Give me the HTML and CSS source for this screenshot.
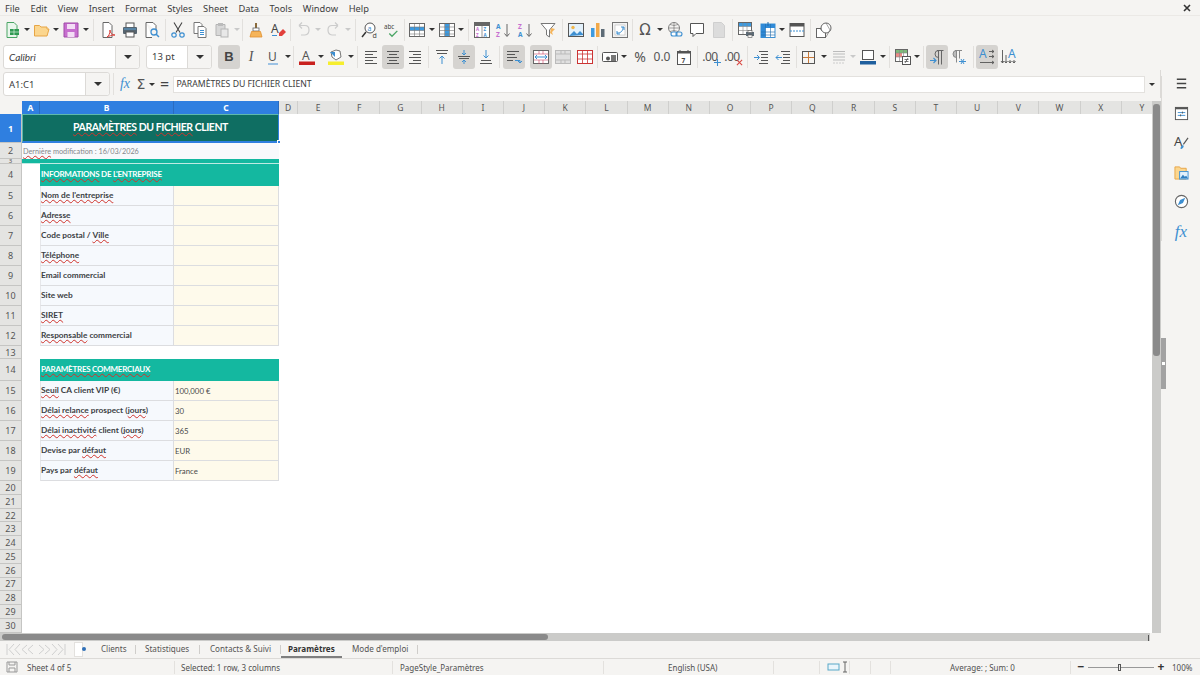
FILE: index.html
```html
<!DOCTYPE html>
<html lang="en">
<head>
    <meta charset="UTF-8" />
    <title>Paramètres - Calc</title>
    <link rel="stylesheet" href="styles.css">
</head>
<body>
<div class="app">
    <div class="menubar">
        <span>File</span><span>Edit</span><span>View</span><span>Insert</span><span>Format</span><span>Styles</span><span>Sheet</span><span>Data</span><span>Tools</span><span>Window</span><span>Help</span>
        <svg class="close-doc" viewBox="0 0 8 8"><path d="M1 1l6 6M7 1l-6 6" stroke="#333" stroke-width="1.6"/></svg>
    </div>

    <div class="toolbar">
        <div class="btn"><svg viewBox="0 0 16 16"><path d="M3 .5h7l3 3v12H3z" fill="#e9f6ec" stroke="#4aa565"/><rect x="6" y="7" width="9" height="6" fill="#2f9a52"/><path d="M6 10h9M10 7v6" stroke="#d8f0df" stroke-width=".7"/></svg></div><i class="dd"></i>
        <div class="btn"><svg viewBox="0 0 16 16"><path d="M.5 3.5h5l1.5 1.5h6v2H15l-2 7H.5z" fill="#fbd68f" stroke="#e7a545"/></svg></div><i class="dd"></i>
        <div class="btn"><svg viewBox="0 0 16 16"><path d="M1 1h14v14H1z" fill="#c76ecf" stroke="#a04aa8"/><rect x="4" y="2" width="8" height="5" fill="#f3ddf5"/><rect x="4.500" y="10" width="7" height="5" fill="#f3ddf5"/></svg></div><i class="dd"></i>
        <i class="sep s7"></i>
        <div class="btn"><svg viewBox="0 0 16 16"><path d="M3 .5h6l3 3v12H3z" fill="#fff" stroke="#666"/><path d="M7 15c2-1 3-4 3-7 0 3 2 5 5 5-3 0-6 1-8 2z" fill="none" stroke="#d9443f"/></svg></div>
        <div class="btn"><svg viewBox="0 0 16 16"><rect x="4" y="1" width="8" height="5" fill="#fff" stroke="#555"/><rect x="1" y="5" width="14" height="7" rx="1" fill="#56646f"/><rect x="4" y="10" width="8" height="5" fill="#fff" stroke="#555"/><path d="M2 7h12" stroke="#5aa3d8"/></svg></div>
        <div class="btn"><svg viewBox="0 0 16 16"><path d="M2 .5h7l3 3v5M8 15.500H2V.5" fill="#fff" stroke="#666"/><circle cx="10" cy="10" r="3" fill="none" stroke="#3d8fd1" stroke-width="1.300"/><path d="M12 12l3 3" stroke="#3d8fd1" stroke-width="1.500"/></svg></div>
        <i class="sep s4"></i>
        <div class="btn"><svg viewBox="0 0 16 16"><path d="M4 .5l6 10M12 .5l-6 10" stroke="#444" stroke-width="1.100"/><circle cx="4" cy="13" r="2.200" fill="none" stroke="#3d8fd1" stroke-width="1.200"/><circle cx="12" cy="13" r="2.200" fill="none" stroke="#3d8fd1" stroke-width="1.200"/></svg></div>
        <div class="btn"><svg viewBox="0 0 16 16"><path d="M2 .5h6l2 2v9H2z" fill="#fff" stroke="#777"/><path d="M6 4.500h6l2 2v9H6z" fill="#fff" stroke="#777"/><path d="M8 8.500h4M8 10.500h4M8 12.500h4" stroke="#3d8fd1"/></svg></div>
        <div class="btn"><svg viewBox="0 0 16 16"><path d="M2 2.500h9v11H2z" fill="#d8d8d8" stroke="#b5b5b5"/><rect x="4" y="1" width="5" height="3" fill="#bbb"/><rect x="7" y="7" width="7" height="8" fill="#e8e8e8" stroke="#b5b5b5"/></svg></div><i class="dd off"></i>
        <i class="sep s4"></i>
        <div class="btn"><svg viewBox="0 0 16 16"><path d="M8 1v6" stroke="#8a6a3a" stroke-width="2"/><rect x="5" y="6" width="6" height="3" fill="#fff" stroke="#666" stroke-width=".8"/><path d="M3.500 9.500h9L14 15H2z" fill="#f5b45a" stroke="#e09030" stroke-width=".8"/></svg></div>
        <div class="btn"><svg viewBox="0 0 16 16"><text x="1" y="11" class="svg-a">A</text><path d="M2 13.500h5" stroke="#3d8fd1"/><path d="M9 11l4-4 3 3-4 4H9z" fill="#e2403c"/></svg></div>
        <i class="sep s4"></i>
        <div class="btn"><svg viewBox="0 0 16 16"><path d="M5 3.500H11q4 0 4 4.500t-4 5H7M5 3.500l3-3M5 3.500l3 3" transform="translate(-2 0)" fill="none" stroke="#ccc" stroke-width="1.200"/></svg></div><i class="dd off"></i>
        <div class="btn"><svg viewBox="0 0 16 16"><path d="M12 3.500H6q-4 0-4 4.500t4 5h4M12 3.500l-3-3M12 3.500l-3 3" transform="translate(1 0)" fill="none" stroke="#ccc" stroke-width="1.200"/></svg></div><i class="dd off"></i>
        <i class="sep s7"></i>
        <div class="btn"><svg viewBox="0 0 16 16"><circle cx="8" cy="6" r="5" fill="#fff" stroke="#555"/><path d="M4 10l-4 5" stroke="#333" stroke-width="1.500"/><text x="5.500" y="8.500" class="svg-s blue">a</text><text x="10.500" y="16" class="svg-s">d</text></svg></div>
        <div class="btn wide"><svg viewBox="0 0 18 16"><text x="0" y="7" class="svg-s">abc</text><path d="M6 12l3 3 6-6" fill="none" stroke="#4aa565" stroke-width="1.500"/></svg></div>
        <i class="sep s3"></i>
        <div class="btn"><svg viewBox="0 0 16 16"><rect x=".5" y="1.500" width="15" height="13" fill="#fff" stroke="#666"/><rect x="1" y="5" width="14" height="3.500" fill="#3d9ae0"/><path d="M1 5h14M1 8.500h14M1 12h14M5.500 2v12M10.500 2v12" stroke="#777" stroke-width=".6"/></svg></div><i class="dd"></i>
        <div class="btn"><svg viewBox="0 0 16 16"><rect x=".5" y="1.500" width="15" height="13" fill="#fff" stroke="#666"/><rect x="6" y="2" width="4.500" height="12" fill="#3d9ae0"/><path d="M1 5h14M1 8.500h14M1 12h14M5.500 2v12M10.500 2v12" stroke="#777" stroke-width=".6"/></svg></div><i class="dd"></i>
        <i class="sep s6"></i>
        <div class="btn"><svg viewBox="0 0 16 16"><rect x=".5" y=".5" width="15" height="15" fill="#fff" stroke="#666"/><rect x="1" y="1" width="14" height="3" fill="#666"/><path d="M8 4v11" stroke="#999"/><text x="2" y="9" class="svg-t tiny purple">A</text><text x="2" y="15" class="svg-t tiny purple">Z</text><text x="9.500" y="9" class="svg-t tiny blue">Z</text><text x="9.500" y="15" class="svg-t tiny blue">A</text></svg></div>
        <div class="btn"><svg viewBox="0 0 16 16"><text x="0" y="7" class="svg-t blue">A</text><text x="0" y="15" class="svg-t purple">Z</text><path d="M11 2v12M8.500 11.500l2.500 3 2.500-3" fill="none" stroke="#666"/></svg></div>
        <div class="btn"><svg viewBox="0 0 16 16"><text x="0" y="7" class="svg-t purple">Z</text><text x="0" y="15" class="svg-t blue">A</text><path d="M11 2v12M8.500 11.500l2.500 3 2.500-3" fill="none" stroke="#666"/></svg></div>
        <div class="btn"><svg viewBox="0 0 16 16"><path d="M1 1.500h14L9.500 8v7L6.500 13V8z" fill="#fff" stroke="#777"/><path d="M11 6l4 1-3 3 1 3-3-2z" fill="#f5b45a"/></svg></div>
        <i class="sep s6"></i>
        <div class="btn"><svg viewBox="0 0 16 16"><rect x=".5" y="1.500" width="15" height="13" fill="#e3f1fb" stroke="#555"/><circle cx="5" cy="5.500" r="1.700" fill="#f1b64a"/><path d="M1 14l5-5 3 3 3-3 3 3v1z" fill="#3d8fd1"/></svg></div>
        <div class="btn"><svg viewBox="0 0 16 16"><rect x="1" y="6" width="3.500" height="9" fill="#3d9ae0"/><rect x="6" y="1" width="3.500" height="14" fill="#f1a94a"/><rect x="11" y="7" width="3.500" height="8" fill="#5d6b76"/></svg></div>
        <div class="btn"><svg viewBox="0 0 16 16"><rect x=".5" y=".5" width="15" height="15" fill="#f3f3f3" stroke="#777"/><rect x="3" y="3" width="10" height="10" fill="#fff" stroke="#bbb" stroke-width=".6"/><path d="M5 11c4 0 6-2 6-6M9 5h3v3M5 9v3h3" fill="none" stroke="#3d8fd1"/></svg></div>
        <i class="sep s3"></i>
        <div class="btn"><span class="omega">Ω</span></div><i class="dd"></i>
        <div class="btn"><svg viewBox="0 0 16 16"><circle cx="7" cy="6" r="5.500" fill="none" stroke="#666" stroke-width=".8"/><path d="M1.500 6h11M7 .5v11M3 2.500q4 2 8 0M3 9.500q4-2 8 0" fill="none" stroke="#666" stroke-width=".6"/><rect x="4" y="10" width="6" height="4" rx="2" fill="#fff" stroke="#3d8fd1" stroke-width="1.100"/><rect x="9" y="10" width="6" height="4" rx="2" fill="none" stroke="#3d8fd1" stroke-width="1.100"/></svg></div>
        <div class="btn"><svg viewBox="0 0 16 16"><path d="M1.500 1.500h13v10H7l-3 3v-3H1.500z" fill="#fff" stroke="#555"/></svg></div>
        <div class="btn"><svg viewBox="0 0 16 16"><path d="M2.500.5h8l3 3v12h-11z" fill="#dcdcdc" stroke="#cfcfcf"/></svg></div>
        <i class="sep s5"></i>
        <div class="btn"><svg viewBox="0 0 16 16"><rect x=".5" y=".5" width="13" height="12" fill="#fff" stroke="#666"/><rect x="1" y="1" width="12" height="3.500" fill="#3d9ae0"/><path d="M1 4.500h12M1 8.500h12M5 1v11M9 1v11" stroke="#888" stroke-width=".6"/><rect x="8" y="10" width="8" height="4" fill="#5d6b76"/><rect x="10" y="8.500" width="4" height="2" fill="#fff" stroke="#555" stroke-width=".6"/><rect x="10" y="13" width="4" height="2.500" fill="#fff" stroke="#555" stroke-width=".6"/></svg></div>
        <div class="btn"><svg viewBox="0 0 16 16"><rect x="1" y="2" width="14" height="13.500" fill="#fff" stroke="#3d8fd1"/><rect x="1" y="2" width="4.500" height="13.500" fill="#2f8ad8"/><rect x="1" y="2" width="14" height="4" fill="#2f8ad8"/><path d="M1 10h14M1 13h14M5.500 2v13M10.500 2v13" stroke="#1f6aaa" stroke-width=".6"/><path d="M8 0v4" stroke="#1f6aaa"/></svg></div><i class="dd"></i>
        <div class="btn"><svg viewBox="0 0 16 16"><rect x="1" y="1.500" width="14" height="13" fill="#fff" stroke="#555"/><rect x="1" y="1.500" width="14" height="3" fill="#555"/><path d="M1 9h14" stroke="#3d8fd1" stroke-dasharray="2 1"/></svg></div>
        <i class="sep s5"></i>
        <div class="btn"><svg viewBox="0 0 16 16"><rect x=".5" y="6.500" width="9" height="9" fill="#fff" stroke="#666"/><circle cx="10" cy="6" r="5" fill="#fff" stroke="#666"/><path d="M4 6.500L6 9M10 1l4 7-4 7" fill="none" stroke="#666" stroke-width=".6"/></svg></div>
    </div>

    <div class="toolbar second">
        <div class="combo font-box"><span class="font-name">Calibri</span><b class="combo-arrow"><i class="dd"></i></b></div>
        <div class="combo size-box"><span>13 pt</span><b class="combo-arrow"><i class="dd"></i></b></div>
        <div class="btn on"><span class="bold-b">B</span></div>
        <div class="btn"><span class="ital-i">I</span></div>
        <div class="btn"><svg viewBox="0 0 16 16"><text x="3" y="12" class="svg-u">U</text><path d="M3 15h10" stroke="#6ba8dc" stroke-width="1.300"/></svg></div><i class="dd"></i>
        <i class="sep s4"></i>
        <div class="btn"><svg viewBox="0 0 16 16"><text x="3" y="11" class="svg-u">A</text><rect x="0" y="12.500" width="16" height="3.500" fill="#c9211e"/></svg></div><i class="dd"></i>
        <div class="btn"><svg viewBox="0 0 16 16"><path d="M3 3l5-2 4 1 1 6-5 3-4-3z" fill="#fff" stroke="#555" stroke-width=".8"/><path d="M2 3h5v5z" fill="#3d8fd1"/><rect x="0" y="12.500" width="16" height="3.500" fill="#f6ee2e"/></svg></div><i class="dd"></i>
        <i class="sep s5"></i>
        <div class="btn"><svg viewBox="0 0 16 16" class="lines"><path d="M2 2.500h12M2 5.500h8M2 8.500h12M2 11.500h8M2 14.500h12"/></svg></div>
        <div class="btn on"><svg viewBox="0 0 16 16" class="lines"><path d="M2 2.500h12M4 5.500h8M2 8.500h12M4 11.500h8M2 14.500h12"/></svg></div>
        <div class="btn"><svg viewBox="0 0 16 16" class="lines"><path d="M2 2.500h12M6 5.500h8M2 8.500h12M6 11.500h8M2 14.500h12"/></svg></div>
        <i class="sep s5"></i>
        <div class="btn"><svg viewBox="0 0 16 16"><path d="M2 1.500h12M3 4.500h10" stroke="#555"/><path d="M8 15V7M5.500 9.500L8 7l2.500 2.500" fill="none" stroke="#3d8fd1"/></svg></div>
        <div class="btn on"><svg viewBox="0 0 16 16"><path d="M2 7.500h12M3 9.500h10" stroke="#555"/><path d="M8 1v5M6 4l2 2 2-2M8 15v-4M6 13l2-2 2 2" fill="none" stroke="#3d8fd1"/></svg></div>
        <div class="btn"><svg viewBox="0 0 16 16"><path d="M2 14.500h12M3 11.500h10" stroke="#555"/><path d="M8 1v8M5.500 6.500L8 9l2.500-2.500" fill="none" stroke="#3d8fd1"/></svg></div>
        <i class="sep s6"></i>
        <div class="btn on"><svg viewBox="0 0 16 16"><path d="M1 2.500h12M1 5.500h8M1 8.500h10M1 11.500h6" stroke="#555"/><path d="M9 11.500h5v2M12 12l2 2 2-2" fill="none" stroke="#3d8fd1"/></svg></div>
        <i class="gap5"></i>
        <div class="btn on"><svg viewBox="0 0 16 16"><rect x=".5" y="1.500" width="15" height="13" fill="#fff" stroke="#666"/><path d="M1 5h14M1 11h14M6 2v3M10 2v3M6 11v4M10 11v4" stroke="#c46" stroke-width=".6"/><path d="M2 8h12M4 6l-2 2 2 2M12 6l2 2-2 2" fill="none" stroke="#3d8fd1"/></svg></div>
        <div class="btn"><svg viewBox="0 0 16 16"><rect x=".5" y="1.500" width="15" height="13" fill="#e0e0e0" stroke="#bbb"/><path d="M1 5h14M1 11h14M6 2v3M10 2v3M6 11v4M10 11v4" stroke="#bbb"/></svg></div>
        <div class="btn"><svg viewBox="0 0 16 16"><rect x=".5" y="1.500" width="15" height="13" fill="#fff" stroke="#c33"/><path d="M1 5h14M1 10h14M5.500 2v12M10.500 2v12" stroke="#c33" stroke-width=".8"/></svg></div>
        <i class="sep s3"></i>
        <div class="btn"><svg viewBox="0 0 16 16"><rect x=".5" y="3.500" width="15" height="9" rx="1" fill="#fff" stroke="#555"/><circle cx="6" cy="9.500" r="2" fill="#555"/><rect x="9" y="6" width="5" height="6" fill="#777"/></svg></div><i class="dd"></i>
        <i class="s1"></i>
        <div class="btn"><span class="pct">%</span></div>
        <div class="btn"><span class="num-t">0.0</span></div>
        <div class="btn"><svg viewBox="0 0 16 16"><rect x="1.500" y="2.500" width="13" height="13" fill="#fff" stroke="#555"/><rect x="1.500" y="2.500" width="13" height="2" fill="#555"/><path d="M4 1v3M12 1v3" stroke="#555"/><text x="5.500" y="13.500" class="svg-t">7</text></svg></div>
        <i class="sep s5"></i>
        <div class="btn"><span class="num-t small">.00</span><svg class="mark" viewBox="0 0 8 8"><path d="M4 0v8M0 4h8" stroke="#3d8fd1" stroke-width="1.200"/></svg></div>
        <div class="btn"><span class="num-t small">.00</span><svg class="mark" viewBox="0 0 8 8"><path d="M1 1l6 6M7 1l-6 6" stroke="#d9443f" stroke-width="1.200"/></svg></div>
        <i class="sep s6"></i>
        <div class="btn"><svg viewBox="0 0 16 16"><path d="M6 2.500h9M8 5.500h7M8 8.500h7M8 11.500h7M6 14.500h9" stroke="#555"/><path d="M1 8.500h5M4 6l2.500 2.500L4 11" fill="none" stroke="#3d8fd1"/></svg></div>
        <div class="btn"><svg viewBox="0 0 16 16"><path d="M6 2.500h9M8 5.500h7M8 8.500h7M8 11.500h7M6 14.500h9" stroke="#555"/><path d="M7 8.500H1M3.500 6L1 8.500 3.500 11" fill="none" stroke="#3d8fd1"/></svg></div>
        <i class="sep s4"></i>
        <div class="btn"><svg viewBox="0 0 16 16"><rect x="1.500" y="2.500" width="12" height="12" fill="none" stroke="#555"/><path d="M7.500 3v11M2 8.500h11" stroke="#c97a3a"/></svg></div><i class="dd"></i>
        <div class="btn"><svg viewBox="0 0 16 16"><path d="M2 2.500h12M2 5h12M2 8h12M2 11h12" stroke="#bbb" stroke-width="1.200"/><path d="M2 14h12" stroke="#ccc" stroke-dasharray="2 1"/></svg></div><i class="dd off"></i>
        <div class="btn"><svg viewBox="0 0 16 16"><rect x="2.500" y="1.500" width="11" height="9" fill="#fff" stroke="#555"/><rect x="0" y="12" width="16" height="3.500" fill="#1f5f9e"/></svg></div><i class="dd"></i>
        <i class="sep s5"></i>
        <div class="btn"><svg viewBox="0 0 16 16"><rect x=".5" y=".5" width="12" height="12" fill="#fff" stroke="#666"/><rect x="1" y="1" width="11" height="3" fill="#7dbb7a"/><rect x="1" y="4" width="6" height="4" fill="#ec8b85"/><path d="M1 4h11M1 8h11M4.500 1v11M8.500 1v11" stroke="#888" stroke-width=".6"/><rect x="7.500" y="7.500" width="8" height="8" fill="#fff" stroke="#555"/><path d="M9.500 10.500h4M9.500 12.500h4M10 14l3-5" stroke="#555" stroke-width=".8"/></svg></div><i class="dd"></i>
        <i class="sep s5"></i>
        <div class="btn on"><svg viewBox="0 0 16 16"><path d="M9.500 1.500v14M12.500 1.500v14M8 1.500h6.500M9.500 1.500a3.500 3.500 0 0 0 0 7" fill="none" stroke="#666"/><path d="M1 11.500h6M4.500 9L7 11.500 4.500 14" fill="none" stroke="#3d8fd1" stroke-width="1.100"/></svg></div>
        <div class="btn"><svg viewBox="0 0 16 16"><path d="M5.500 1.500v12M8.500 1.500v8M4 1.500h7M5.500 1.500a3.500 3.500 0 0 0 0 7" fill="#bbb" stroke="#888"/><path d="M8 12.500h7M13 10l-3 5M10 10l3 5" fill="none" stroke="#3d8fd1"/></svg></div>
        <i class="sep s6"></i>
        <div class="btn on"><svg viewBox="0 0 16 16"><text x="0" y="9" class="svg-a blue">A</text><path d="M10 2.500h5M13 1l2 1.500L13 4M10 7.500h5M13 6l2 1.500L13 9M1 13.500h14M13 12l2 1.500-2 1.500" fill="none" stroke="#555" stroke-width=".9"/></svg></div>
        <div class="btn"><svg viewBox="0 0 16 16"><text x="7" y="9" class="svg-a blue">A</text><path d="M1.500 1v13M0 12l1.500 2 1.500-2M5 6v8M3.500 12L5 14l1.500-2M9 11v3M7.500 12L9 14l1.500-2M13 11v3M11.500 12l1.500 2 1.500-2" fill="none" stroke="#555" stroke-width=".9"/></svg></div>
    </div>

    <div class="formula-row">
        <div class="formula-main">
            <div class="combo name-box"><span>A1:C1</span><b class="combo-arrow"><i class="dd"></i></b></div>
            <i class="sep s-name"></i>
            <span class="fx">fx</span>
            <span class="sigma">Σ</span><i class="dd"></i>
            <span class="equals">=</span>
            <div class="formula-input">PARAMÈTRES DU FICHIER CLIENT</div>
            <i class="dd formula-dd"></i>
        </div>
    </div>

    <div class="workspace">
        <div class="sheet">
            <div class="col-head">
                <div class="corner"></div>
                <div class="ch sel col-a">A</div><div class="ch sel col-b">B</div><div class="ch sel col-c">C</div><div class="ch col-d">D</div>
                <div class="ch">E</div><div class="ch">F</div><div class="ch">G</div><div class="ch">H</div><div class="ch">I</div><div class="ch">J</div><div class="ch">K</div><div class="ch">L</div><div class="ch">M</div><div class="ch">N</div><div class="ch">O</div><div class="ch">P</div><div class="ch">Q</div><div class="ch">R</div><div class="ch">S</div><div class="ch">T</div><div class="ch">U</div><div class="ch">V</div><div class="ch">W</div><div class="ch">X</div><div class="ch">Y</div>
            </div>
            <div class="sheet-body">
                <div class="row-head">
                    <div class="rh sel r1">1</div><div class="rh r2">2</div><div class="rh r3">3</div><div class="rh r-h">4</div>
                    <div class="rh r-n">5</div><div class="rh r-n">6</div><div class="rh r-n">7</div><div class="rh r-n">8</div><div class="rh r-n">9</div><div class="rh r-n">10</div><div class="rh r-n">11</div><div class="rh r-n">12</div>
                    <div class="rh r-s">13</div><div class="rh r-h">14</div>
                    <div class="rh r-n">15</div><div class="rh r-n">16</div><div class="rh r-n">17</div><div class="rh r-n">18</div><div class="rh r-n">19</div>
                    <div class="rh r-e">20</div><div class="rh r-e">21</div><div class="rh r-e">22</div><div class="rh r-e">23</div><div class="rh r-e">24</div><div class="rh r-e">25</div><div class="rh r-e">26</div><div class="rh r-e">27</div><div class="rh r-e">28</div><div class="rh r-e">29</div><div class="rh r-e">30</div>
                </div>
                <div class="cells">
                    <div class="title-cell"><span><u>PARAMÈTRES</u> DU <u>FICHIER</u> CLIENT</span><i class="sel-handle"></i></div>
                    <div class="modified"><span><u>Dernière</u> modification : 16/03/2026</span></div>
                    <div class="strip"></div>

                    <div class="section"><span><u>INFORMATIONS</u> DE <u>L'ENTREPRISE</u></span></div>
                    <div class="label"><u>Nom de l'entreprise</u></div><div class="value"></div>
                    <div class="label"><u>Adresse</u></div><div class="value"></div>
                    <div class="label">Code postal / <u>Ville</u></div><div class="value"></div>
                    <div class="label"><u>Téléphone</u></div><div class="value"></div>
                    <div class="label">Email commercial</div><div class="value"></div>
                    <div class="label">Site web</div><div class="value"></div>
                    <div class="label"><u>SIRET</u></div><div class="value"></div>
                    <div class="label"><u>Responsable</u> commercial</div><div class="value"></div>

                    <div class="spacer"></div>

                    <div class="section"><span><u>PARAMÈTRES COMMERCIAUX</u></span></div>
                    <div class="label"><u>Seuil</u> CA client VIP (€)</div><div class="value">100,000 €</div>
                    <div class="label"><u>Délai relance</u> prospect (<u>jours</u>)</div><div class="value">30</div>
                    <div class="label"><u>Délai inactivité</u> client (<u>jours</u>)</div><div class="value">365</div>
                    <div class="label">Devise par <u>défaut</u></div><div class="value">EUR</div>
                    <div class="label">Pays par <u>défaut</u></div><div class="value">France</div>
                </div>
            </div>
            <div class="hscroll"><div class="hscroll-thumb"></div></div>
            <div class="tabbar">
                <svg class="tab-nav" viewBox="0 0 60 13"><path d="M1 1v11M8 1L3 6.500 8 12M14 1L9 6.500 14 12M21 2l-5 4.500 5 4.500M27 2l-5 4.500 5 4.500M33 2l5 4.500-5 4.500M39 2l5 4.500-5 4.500M46 1l5 5.500-5 5.500M52 1l5 5.500-5 5.500M59 1v11" fill="none" stroke="#d0d0d0"/></svg>
                <div class="tab-new"><i class="tab-page"></i><i class="tab-dot"></i></div>
                <span class="tab t-clients">Clients</span>
                <span class="tab t-stats">Statistiques</span>
                <span class="tab t-contacts">Contacts &amp; Suivi</span>
                <span class="tab active">Paramètres</span>
                <span class="tab t-mode">Mode d'emploi</span>
            </div>
        </div>
        <div class="vscroll"><div class="vscroll-thumb"></div></div>
        <div class="sidebar">
            <svg viewBox="0 0 16 16"><path d="M3 3.500h10M3 8h10M3 12.500h10" stroke="#444" stroke-width="1.500"/></svg>
            <svg viewBox="0 0 16 16"><rect x="1.500" y="1.500" width="13" height="13" fill="#fff" stroke="#555"/><rect x="1.500" y="1.500" width="13" height="2" fill="#555"/><path d="M4 7h8M4 10h8" stroke="#3d8fd1"/><path d="M9 6v2M7 9v2" stroke="#555"/></svg>
            <svg viewBox="0 0 16 16"><text x="0" y="12" class="svg-a big">A</text><path d="M7 15c0-3 1-4 3-4 1 2-1 4-3 4z" fill="#3d8fd1"/><path d="M10 10l5-7" stroke="#555" stroke-width="1.200"/></svg>
            <svg viewBox="0 0 16 16"><path d="M1 2h5l1 1.500h6V15H1z" fill="#fbd68f" stroke="#e7a545"/><rect x="6" y="7" width="9" height="8" fill="#e3f1fb" stroke="#3d8fd1"/><path d="M6.500 14.500l3-4 2 2 1.500-1 2 3z" fill="#2f7fc0"/></svg>
            <svg viewBox="0 0 16 16"><circle cx="8" cy="8" r="6.500" fill="#fff" stroke="#666" stroke-width="1.200"/><path d="M12 4l-2.500 5.500L4 12l2.500-5.500z" fill="#3d8fd1"/></svg>
            <span class="side-fx">fx</span>
        </div>
        <div class="side-grip"><i></i></div>
    </div>

    <div class="statusbar">
        <div class="st st-save"><svg viewBox="0 0 12 12"><path d="M1 1h10v10H1z" fill="none" stroke="#999"/><path d="M3 1v3h6V1M3 11V7h6v4" fill="none" stroke="#999"/></svg><span>Sheet 4 of 5</span></div>
        <div class="st st-sel">Selected: 1 row, 3 columns</div>
        <div class="st st-style">PageStyle_Paramètres</div>
        <div class="st st-lang">English (USA)</div>
        <div class="st st-ins"></div>
        <div class="st st-mode"><svg viewBox="0 0 24 12"><rect x="1" y="3" width="11" height="6" fill="#eaf5fb" stroke="#58a8c8"/><path d="M16 1h4M18 1v10M16 11h4" stroke="#666"/></svg></div>
        <div class="st st-a"></div>
        <div class="st st-b"></div>
        <div class="st st-sum">Average: ; Sum: 0</div>
        <div class="zoom-box">
            <span class="zoom-op">−</span>
            <div class="slider"><i></i></div>
            <span class="zoom-op">+</span>
        </div>
        <div class="st st-pct">100%</div>
    </div>
</div>
</body>
</html>
```

FILE: styles.css
```css
:root {
    --ui-bg: #f5f4f2;
    --ui-line: #dcdad7;
    --ui-text: #3d3d3d;
    --active: #d5d3d0;
    --head-bg: #e4e4e2;
    --head-sel: #2f7fe0;
    --teal: #14b8a0;
    --teal-dark: #0f6e62;
}

* {
    margin: 0;
    padding: 0;
    box-sizing: border-box;
}

body {
    background: var(--ui-bg);
    font-family: "Noto Sans", sans-serif;
    color: var(--ui-text);
    overflow: hidden;
}

i {
    font-style: normal;
}

.app {
    width: 1200px;
    height: 675px;
    display: flex;
    flex-direction: column;
}

.menubar {
    height: 16px;
    display: flex;
    align-items: center;
    gap: 10.6px;
    padding-left: 5px;
    padding-top: 1px;
    font-size: 9.3px;
    position: relative;
    border-bottom: 1px solid #ebe9e6;
    flex: none;
}

.close-doc {
    position: absolute;
    top: 4px;
    right: 9px;
    width: 8px;
    height: 8px;
}

.toolbar {
    height: 27px;
    display: flex;
    align-items: center;
    padding-left: 1px;
    flex: none;
}

.toolbar.second {
    padding-left: 3px;
}

.btn {
    width: 22px;
    height: 24px;
    flex: none;
    display: flex;
    align-items: center;
    justify-content: center;
    border-radius: 3px;
    position: relative;
}

.btn svg {
    width: 16px;
    height: 16px;
    overflow: visible;
}

.btn .mark {
    position: absolute;
    right: 1px;
    bottom: 3px;
    width: 7px;
    height: 7px;
}

.btn.on {
    background: var(--active);
}

.dd {
    width: 7.5px;
    flex: none;
    display: flex;
    justify-content: center;
}

.dd::after {
    content: "";
    border-left: 3px solid transparent;
    border-right: 3px solid transparent;
    border-top: 3px solid #333;
}

.dd.off::after {
    border-top-color: #c9c9c9;
}

.sep {
    flex: none;
    height: 22px;
    display: flex;
    justify-content: center;
}

.sep::after {
    content: "";
    width: 1px;
    background: #e2e0dd;
}

.s1 { width: 1px; flex: none; }
.s3 { width: 3px; }
.s4 { width: 4px; }
.s5 { width: 5px; }
.s6 { width: 6px; }
.s7 { width: 7.5px; }
.gap5 { width: 5px; flex: none; }

.combo {
    height: 24px;
    display: flex;
    background: #fff;
    border: 1px solid var(--ui-line);
    border-radius: 3px;
    font-size: 9.5px;
    align-items: stretch;
    flex: none;
}

.combo span {
    flex: 1;
    display: flex;
    align-items: center;
    padding-left: 5px;
}

.combo-arrow {
    width: 24px;
    display: flex;
    align-items: center;
    justify-content: center;
    background: var(--ui-bg);
    border-left: 1px solid var(--ui-line);
    border-radius: 0 3px 3px 0;
}

.combo-arrow .dd::after {
    border-left-width: 4px;
    border-right-width: 4px;
    border-top-width: 4px;
}

.font-box {
    width: 137px;
    margin-right: 6px;
}

.font-name {
    font-family: "Lato", sans-serif;
    font-style: italic;
    font-size: 10px;
}

.size-box {
    width: 66px;
    margin-right: 6px;
}

.bold-b {
    font-family: "Liberation Sans", sans-serif;
    font-weight: bold;
    font-size: 13px;
    color: #444;
}

.ital-i {
    font-family: "Liberation Serif", serif;
    font-style: italic;
    font-size: 14px;
    color: #555;
}

.pct {
    font-size: 14px;
    color: #555;
}

.num-t {
    font-size: 12px;
    color: #555;
}

.num-t.small {
    font-size: 12px;
    letter-spacing: -0.5px;
    margin-right: 2px;
}

.omega {
    font-family: "DejaVu Sans", sans-serif;
    font-size: 15px;
    color: #555;
}

.lines path {
    stroke: #555;
    fill: none;
}

.svg-a {
    font: 12px "Noto Sans", sans-serif;
    fill: #444;
}

.svg-a.big {
    font-size: 14px;
}

.svg-u {
    font: 12px "Noto Sans", sans-serif;
    fill: #555;
}

.svg-s {
    font: 7px "Noto Sans", sans-serif;
    fill: #444;
}

.svg-t {
    font: bold 6.5px "Noto Sans", sans-serif;
    fill: #444;
}

.svg-t.tiny {
    font-size: 4.5px;
}

.blue {
    fill: #3d8fd1;
}

.purple {
    fill: #c66fd0;
}

.formula-row {
    height: 28px;
    display: flex;
    flex: none;
}

.formula-main {
    width: 1161px;
    display: flex;
    align-items: center;
    padding-left: 3px;
    border-right: 1px solid var(--ui-line);
}

.name-box {
    width: 107px;
    height: 24px;
}

.s-name {
    width: 6px;
}

.fx {
    width: 18px;
    text-align: center;
    font-family: "Liberation Serif", serif;
    font-style: italic;
    font-size: 14px;
    color: #3d8fd1;
}

.sigma {
    width: 14px;
    text-align: center;
    font-family: "DejaVu Sans", sans-serif;
    font-size: 14px;
    color: #555;
}

.equals {
    width: 14px;
    text-align: center;
    font-size: 16px;
    color: #444;
    margin-left: 2px;
    margin-right: 1px;
}

.formula-input {
    width: 972px;
    height: 17px;
    background: #fff;
    border: 1px solid #e3e1de;
    font-size: 8.7px;
    line-height: 15px;
    padding-left: 3px;
}

.formula-dd {
    width: 15px;
}

.workspace {
    flex: 1;
    display: flex;
    min-height: 0;
    position: relative;
}

.sheet {
    width: 1152px;
    display: flex;
    flex-direction: column;
    padding-top: 3px;
}

.col-head {
    height: 13px;
    display: flex;
    flex: none;
    overflow: hidden;
}

.corner {
    width: 22px;
    flex: none;
}

.ch {
    width: 41.2px;
    flex: none;
    background: var(--head-bg);
    border-right: 1px solid #cfcfcd;
    font-size: 8.5px;
    line-height: 13px;
    text-align: center;
    color: #555;
}

.ch.sel {
    background: var(--head-sel);
    color: #fff;
    font-weight: bold;
    border-right-color: #2a6cc0;
}

.col-a { width: 18px; }
.col-b { width: 134px; }
.col-c { width: 105px; }
.col-d { width: 19px; }

.sheet-body {
    height: 519px;
    display: flex;
    background: #fff;
    overflow: hidden;
}

.row-head {
    width: 22px;
    flex: none;
}

.rh {
    background: var(--head-bg);
    border-bottom: 1px solid #c5c5c3;
    border-right: 1px solid #c5c5c3;
    font-size: 9px;
    color: #555;
    display: flex;
    align-items: center;
    justify-content: center;
    overflow: hidden;
}

.rh.sel {
    background: var(--head-sel);
    color: #fff;
    font-weight: bold;
}

.r1 { height: 29px; }
.r2 { height: 16px; }
.r3 { height: 5px; line-height: 4px; font-size: 6px; align-items: flex-start; }
.r-h { height: 22px; }
.r-n { height: 20px; }
.r-s { height: 13px; }
.r-e { height: 13.8px; }

.cells {
    display: grid;
    grid-template-columns: 18px 134px 105px;
    grid-template-rows: 29px 16px 5px 22px repeat(8, 20px) 13px 22px repeat(5, 20px);
    font-family: "Lato", sans-serif;
    align-content: start;
    width: 257px;
}

.cells u {
    text-decoration: underline wavy #d0342c;
    text-decoration-thickness: 0.7px;
    text-underline-offset: 1px;
}

.title-cell {
    grid-column: 1 / 4;
    background: var(--teal-dark);
    color: #fff;
    font-weight: bold;
    font-size: 10.5px;
    letter-spacing: -0.45px;
    display: flex;
    align-items: center;
    justify-content: center;
    padding-bottom: 2px;
    border: 1px solid #5fb9ac;
    border-bottom: 2px solid var(--head-sel);
    border-right: 1px solid var(--head-sel);
    position: relative;
}

.sel-handle {
    position: absolute;
    right: -3px;
    bottom: -3px;
    width: 4px;
    height: 4px;
    background: var(--head-sel);
    border: 1px solid #fff;
}

.modified {
    grid-column: 1 / 4;
    background: #f8f9fc;
    color: #85878a;
    font-size: 7.3px;
    display: flex;
    align-items: center;
    padding-left: 1px;
}

.strip {
    grid-column: 1 / 4;
    background: var(--teal);
    border-bottom: 1px solid #bfeae3;
}

.section {
    grid-column: 2 / 4;
    background: var(--teal);
    color: #fff;
    font-weight: bold;
    font-size: 8px;
    letter-spacing: -0.25px;
    display: flex;
    align-items: center;
    padding-left: 1px;
    padding-bottom: 2px;
}

.label {
    grid-column: 2;
    background: #f6f9fd;
    border-bottom: 1px solid #dcdde0;
    border-right: 1px solid #dcdde0;
    border-left: 1px solid #e6e7ea;
    color: #3c3f44;
    font-weight: bold;
    font-size: 8.3px;
    line-height: 19px;
    white-space: nowrap;
}

.value {
    grid-column: 3;
    background: #fefaeb;
    border-bottom: 1px solid #dcdde0;
    border-right: 1px solid #dcdde0;
    color: #4a4a4a;
    font-size: 7.8px;
    line-height: 21px;
    padding-left: 1px;
}

.spacer {
    grid-column: 1 / 4;
}

.hscroll {
    height: 8px;
    background: #cbcbc9;
    flex: none;
    margin-right: 2px;
    padding-left: 2px;
    position: relative;
}

.hscroll::after {
    content: "";
    position: absolute;
    right: 1px;
    top: 2px;
    width: 1px;
    height: 6px;
    background: #555;
}

.hscroll-thumb {
    width: 546px;
    height: 6px;
    margin-top: 1px;
    background: #8a8a8a;
    border-radius: 3px;
    float: left;
}

.tabbar {
    height: 17px;
    display: flex;
    align-items: center;
    font-size: 8.1px;
    color: #555;
    flex: none;
}

.tab-nav {
    width: 60px;
    height: 13px;
    margin-left: 6px;
    flex: none;
}

.tab-new {
    width: 14px;
    height: 15px;
    margin-left: 8px;
    position: relative;
    flex: none;
}

.tab-page {
    position: absolute;
    left: 0;
    top: 0;
    width: 9px;
    height: 15px;
    background: #fff;
    border: 1px solid #e3e1de;
}

.tab-dot {
    position: absolute;
    left: 8px;
    top: 5px;
    width: 4px;
    height: 4px;
    border-radius: 50%;
    background: #2f6fb8;
}

.tab {
    height: 17px;
    line-height: 16px;
    white-space: nowrap;
    position: relative;
    flex: none;
}

.tab:not(.active)::after {
    content: "";
    position: absolute;
    top: 4px;
    width: 1px;
    height: 9px;
    background: #cfcdca;
}

.t-clients { margin-left: 13px; width: 44px; }
.t-clients::after { left: 34px; }
.t-stats { width: 65px; }
.t-stats::after { left: 54px; }
.t-contacts { width: 71px; }
.t-contacts::after { left: 70px; }
.active {
    width: 61px;
    padding-left: 7px;
    font-weight: bold;
    color: #333;
    border-bottom: 2px solid #7f7f7f;
}
.t-mode { margin-left: 10px; }
.t-mode::after { right: -10px; }

.vscroll {
    width: 9px;
    margin-top: 3px;
    background: #cbcbc9;
    flex: none;
    height: 532px;
    padding: 3px 1px 0;
}

.vscroll-thumb {
    width: 7px;
    height: 252px;
    background: #8a8a8a;
    border-radius: 3px;
}

.sidebar {
    flex: 1;
    display: flex;
    flex-direction: column;
    align-items: center;
    gap: 14.5px;
    margin-top: -22px;
    border-left: 1px solid var(--ui-line);
    height: 165px;
}

.sidebar svg {
    width: 15px;
    height: 15px;
    flex: none;
    overflow: visible;
}

.side-fx {
    font-family: "Liberation Serif", serif;
    font-style: italic;
    font-size: 17px;
    line-height: 15px;
    color: #3d8fd1;
}

.side-grip {
    position: absolute;
    left: 1161px;
    top: 240px;
    width: 5px;
    height: 51px;
    background: #a2a2a2;
}

.side-grip i {
    position: absolute;
    left: 1px;
    top: 24px;
    width: 3px;
    height: 3px;
    background: #fff;
}

.statusbar {
    height: 17px;
    display: flex;
    align-items: center;
    font-size: 8px;
    border-top: 1px solid var(--ui-line);
    color: #505050;
    flex: none;
}

.st {
    height: 13px;
    line-height: 13px;
    border-right: 1px solid #e3e1de;
    white-space: nowrap;
    flex: none;
}

.st-save {
    width: 175px;
    display: flex;
    align-items: center;
    gap: 9px;
    padding-left: 6px;
}

.st-save svg {
    width: 12px;
    height: 12px;
}

.st-sel {
    width: 218px;
    padding-left: 6px;
}

.st-style {
    width: 211px;
    padding-left: 7px;
}

.st-lang {
    width: 170px;
    padding-left: 64px;
}

.st-ins {
    width: 46px;
}

.st-mode {
    width: 30px;
    padding-left: 7px;
}

.st-mode svg {
    width: 24px;
    height: 12px;
}

.st-a { width: 21px; }
.st-b { width: 20px; }

.st-sum {
    width: 180px;
    padding-left: 59px;
}

.zoom-box {
    width: 96px;
    display: flex;
    align-items: center;
    padding-left: 6px;
    flex: none;
}

.zoom-op {
    width: 8px;
    text-align: center;
    font-size: 12px;
    line-height: 12px;
    color: #333;
    font-weight: bold;
}

.slider {
    width: 66px;
    height: 1px;
    margin: 0 3px;
    background: #999;
    position: relative;
}

.slider i {
    position: absolute;
    left: 30px;
    top: -3px;
    width: 3px;
    height: 7px;
    background: #eee;
    border: 1px solid #555;
}

.st-pct {
    border: none;
    padding-left: 5px;
}
```
